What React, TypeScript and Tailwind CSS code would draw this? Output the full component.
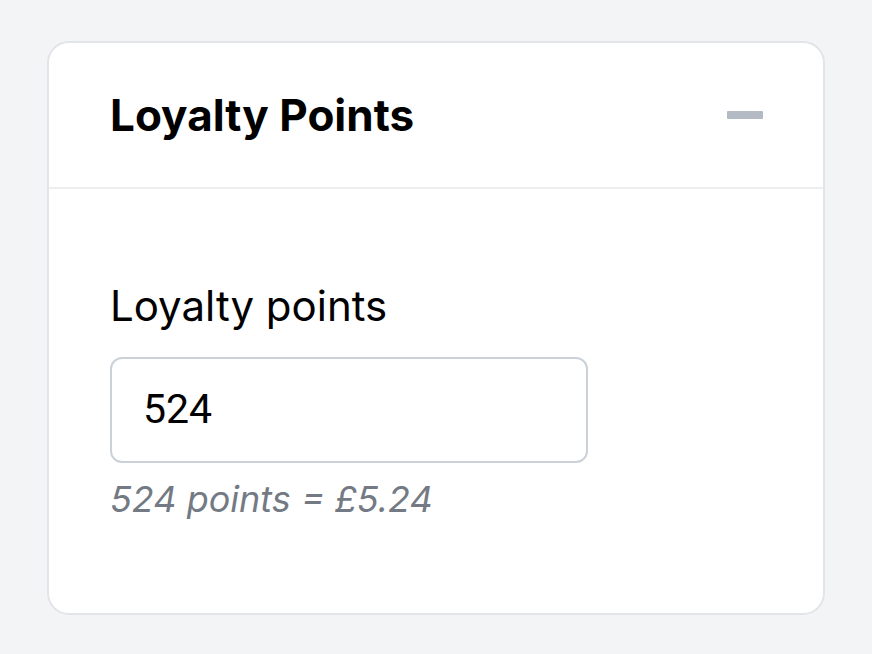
import React from "react";

export default function App() {
  return (
    <div
      className="min-h-[654px] w-[872px] bg-[#f3f4f6] pl-[47px] pt-[41px]"
      style={{ fontFamily: "Inter, 'Noto Sans', sans-serif" }}
    >
      <div className="w-[778px] h-[574px] rounded-[22px] border-2 border-[#e2e4e8] bg-white overflow-hidden">
        <div className="flex h-[146px] items-center justify-between border-b-2 border-[#eceef0] pl-[61px] pr-[60px]">
          <h2 className="text-[44px] font-bold leading-none text-black">Loyalty Points</h2>
          <div className="h-[8px] w-[36px] rounded-[1px] bg-[#b4bac3]" />
        </div>
        <div className="pl-[61px] pt-[92px]">
          <label className="block text-[42px] leading-[50px] text-black">Loyalty points</label>
          <div
            className="mt-[26px] flex h-[106px] w-[478px] items-center rounded-[12px] border-2 border-[#cbd1d8] pl-[31px] text-[41px] text-black"
            style={{ fontFamily: "Roboto, 'Liberation Sans', sans-serif" }}
          >
            524
          </div>
          <p className="mt-[13px] text-[36px] italic leading-[46px] text-[#737a84]">524 points = £5.24</p>
        </div>
      </div>
    </div>
  );
}
